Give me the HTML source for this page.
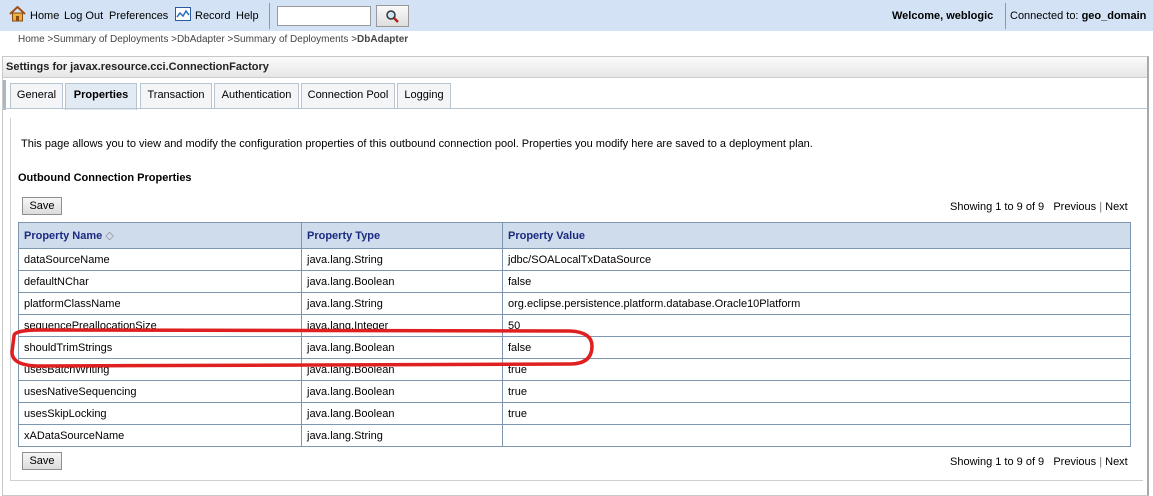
<!DOCTYPE html>
<html><head><style>
*{margin:0;padding:0;box-sizing:border-box}
body{width:1153px;height:494px;background:#fff;font-family:"Liberation Sans",sans-serif;font-size:11px;color:#000;position:relative;overflow:hidden}
.a{position:absolute;white-space:nowrap}
.top{left:0;top:0;width:1153px;height:31px;background:#d3e3f5}
.tab{position:absolute;top:83px;height:26px;border:1px solid #b8c4cf;border-bottom:none;background:#f3f5f7;padding:5px 0 0;text-align:center;font-size:11px}
.btn{position:absolute;width:40px;height:18px;border:1px solid #8f8f8f;background:linear-gradient(#f6f6f6,#dcdcdc);font-size:11px;text-align:center;line-height:16px}
table{position:absolute;left:18px;top:222px;width:1113px;border-collapse:collapse}
td,th{border:1px solid #7f96b0;height:22px;padding:0 5px;text-align:left;font-size:11px;font-weight:normal}
th{background:#cfdcec;color:#1a2a80;font-weight:bold;height:26px}
</style></head><body>
<div class="a top"></div>
<svg class="a" style="left:9px;top:6px" width="17" height="16" viewBox="0 0 17 16"><path d="M1 8 L8.5 1 L16 8" fill="none" stroke="#a0501a" stroke-width="2"/><rect x="3.5" y="7" width="10" height="8" fill="#e8b040" stroke="#8a4a10"/><rect x="7" y="10" width="3" height="5" fill="#8a4a10"/></svg>
<div class="a" style="left:30px;top:10px">Home</div>
<div class="a" style="left:64px;top:10px">Log Out</div>
<div class="a" style="left:109px;top:10px">Preferences</div>
<svg class="a" style="left:175px;top:7px" width="16" height="14"><rect x="0.5" y="0.5" width="15" height="13" fill="#fff" stroke="#2a5aa0"/><path d="M2 10 L5 6 L8 9 L11 4 L14 8" stroke="#2a70c0" fill="none" stroke-width="1.5"/></svg>
<div class="a" style="left:195px;top:10px">Record</div>
<div class="a" style="left:236px;top:10px">Help</div>
<div class="a" style="left:269px;top:3px;width:1px;height:26px;background:#8a9aaa"></div>
<div class="a" style="left:277px;top:6px;width:94px;height:20px;background:#fff;border:1px solid #999"></div>
<div class="a" style="left:376px;top:5px;width:33px;height:22px;border:1px solid #999;background:linear-gradient(#fafafa,#dedede)"></div>
<svg class="a" style="left:385px;top:9px" width="15" height="15"><circle cx="6" cy="6" r="4" fill="#cfe4f5" stroke="#333" stroke-width="1.5"/><path d="M9 9 L13 13" stroke="#b02020" stroke-width="2.5"/></svg>
<div class="a" style="left:892px;top:10px;font-weight:bold">Welcome, weblogic</div>
<div class="a" style="left:1005px;top:3px;width:1px;height:26px;background:#8a9aaa"></div>
<div class="a" style="left:1010px;top:10px">Connected to: <b>geo_domain</b></div>
<div class="a" style="left:18px;top:34px;color:#444;font-size:10px">Home &gt;Summary of Deployments &gt;DbAdapter &gt;Summary of Deployments &gt;<b>DbAdapter</b></div>
<div class="a" style="left:2px;top:56px;width:1147px;height:440px;border:1px solid #c8c8c8;border-right:2px solid #a8a8a8"></div>
<div class="a" style="left:3px;top:57px;width:1144px;height:21px;background:linear-gradient(#fbfbfb,#e6e6e6);border-bottom:1px solid #ccc"></div>
<div class="a" style="left:6px;top:61px;font-weight:bold;color:#222">Settings for javax.resource.cci.ConnectionFactory</div>
<div class="a" style="left:3px;top:80px;width:3px;height:30px;background:#a8b8c8"></div>
<div class="tab" style="left:10px;width:53px">General</div>
<div class="tab" style="left:65px;width:72px;background:#e2ebf4;font-weight:bold;height:27px">Properties</div>
<div class="tab" style="left:140px;width:72px">Transaction</div>
<div class="tab" style="left:214px;width:85px">Authentication</div>
<div class="tab" style="left:301px;width:94px">Connection Pool</div>
<div class="tab" style="left:397px;width:54px">Logging</div>
<div class="a" style="left:3px;top:108px;width:1144px;height:1px;background:#b8c4cf"></div>
<div class="a" style="left:10px;top:118px;width:1133px;height:363px;background:#fff;border-left:1px solid #d0d0d0;border-bottom:1px solid #d0d0d0"></div>
<div class="a" style="left:21px;top:138px">This page allows you to view and modify the configuration properties of this outbound connection pool. Properties you modify here are saved to a deployment plan.</div>
<div class="a" style="left:18px;top:172px;font-weight:bold">Outbound Connection Properties</div>
<div class="btn" style="left:22px;top:197px">Save</div>
<div class="a" style="left:950px;top:201px">Showing 1 to 9 of 9&nbsp;&nbsp; Previous <span style="color:#777">|</span> Next</div>
<table>
<tr><th style="width:283px">Property Name <span style="font-weight:normal;color:#888">&#x25C7;</span></th><th style="width:201px">Property Type</th><th>Property Value</th></tr>
<tr><td>dataSourceName</td><td>java.lang.String</td><td>jdbc/SOALocalTxDataSource</td></tr>
<tr><td>defaultNChar</td><td>java.lang.Boolean</td><td>false</td></tr>
<tr><td>platformClassName</td><td>java.lang.String</td><td>org.eclipse.persistence.platform.database.Oracle10Platform</td></tr>
<tr><td>sequencePreallocationSize</td><td>java.lang.Integer</td><td>50</td></tr>
<tr><td>shouldTrimStrings</td><td>java.lang.Boolean</td><td>false</td></tr>
<tr><td>usesBatchWriting</td><td>java.lang.Boolean</td><td>true</td></tr>
<tr><td>usesNativeSequencing</td><td>java.lang.Boolean</td><td>true</td></tr>
<tr><td>usesSkipLocking</td><td>java.lang.Boolean</td><td>true</td></tr>
<tr><td>xADataSourceName</td><td>java.lang.String</td><td></td></tr>
</table>
<div class="btn" style="left:22px;top:452px">Save</div>
<div class="a" style="left:950px;top:456px">Showing 1 to 9 of 9&nbsp;&nbsp; Previous <span style="color:#777">|</span> Next</div>
<svg class="a" style="left:0;top:0" width="1153" height="494"><path d="M14 336 Q14 330 40 330 L570 331 Q592 332 592 346 Q592 364 570 364 L40 366 Q12 366 12 352 Z" fill="none" stroke="#e02020" stroke-width="3.5"/></svg>
</body></html>
